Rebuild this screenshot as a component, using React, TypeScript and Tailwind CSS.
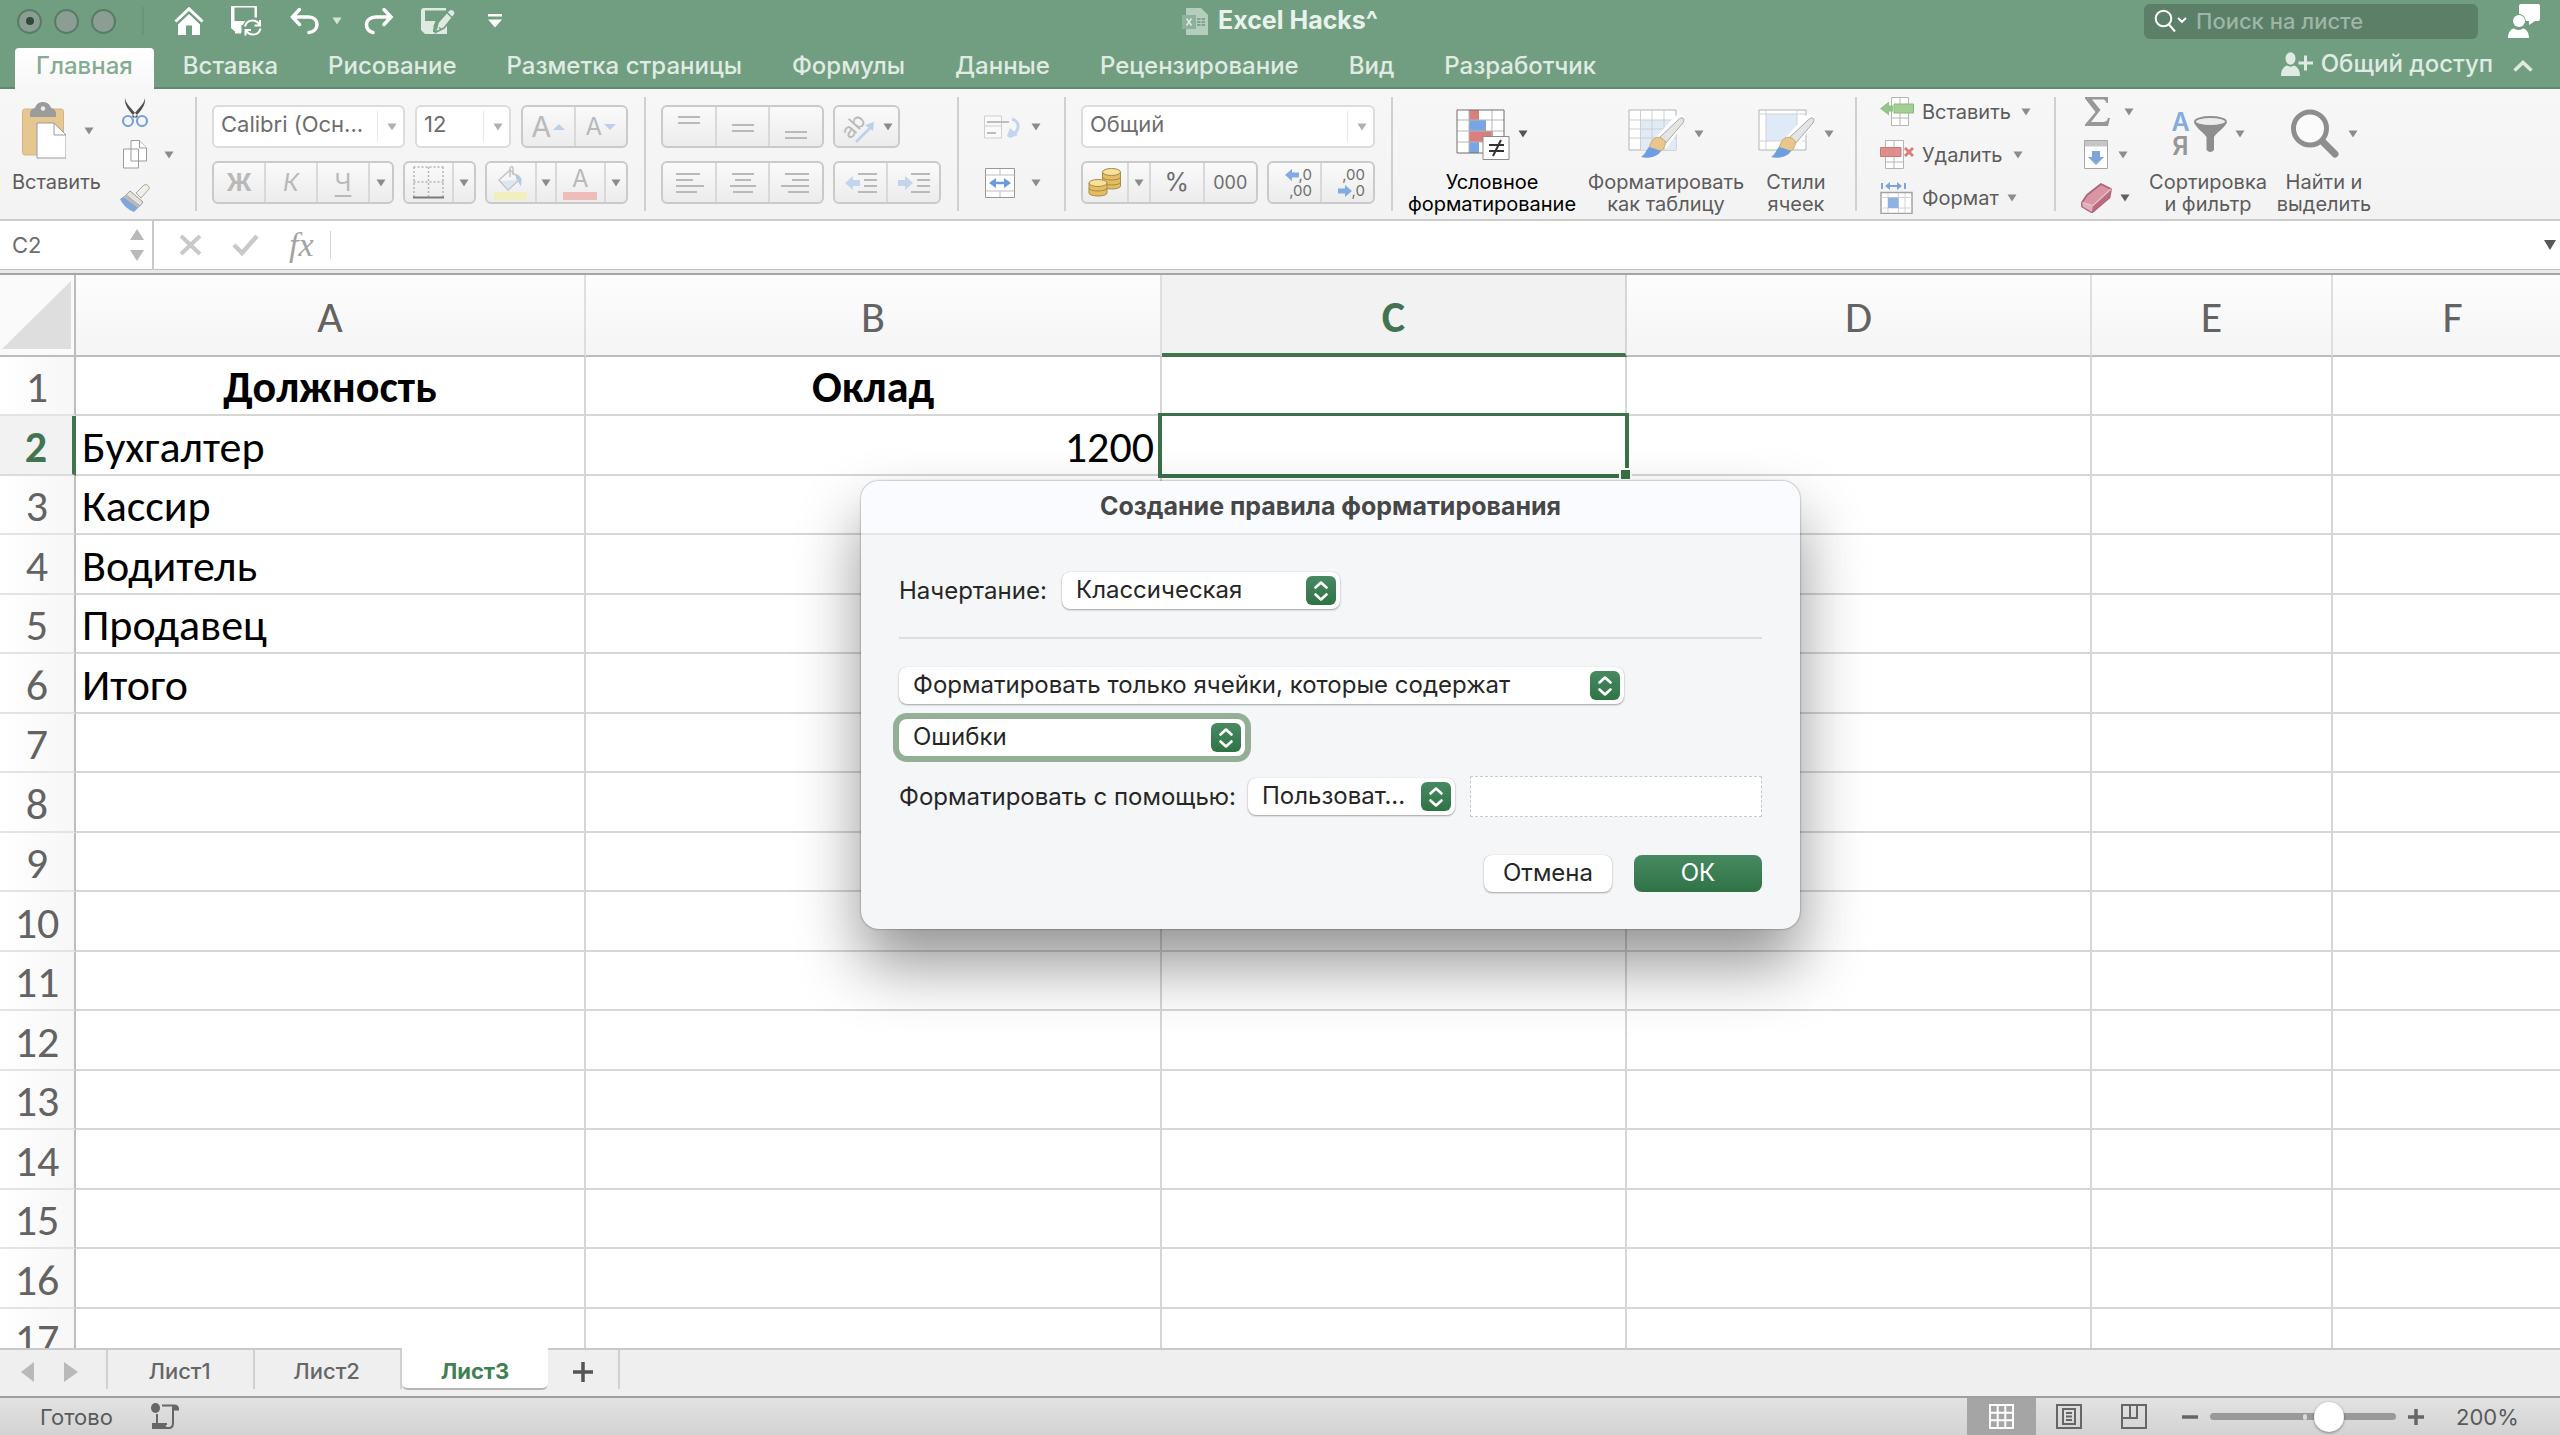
import React from "react";

const UI_FONT = "font-['Inter','Liberation_Sans',sans-serif]";
const CELL_FONT = "font-['Calibri','Lato','Noto_Sans',sans-serif]";

const RIBBON_TABS = [
  "Главная",
  "Вставка",
  "Рисование",
  "Разметка страницы",
  "Формулы",
  "Данные",
  "Рецензирование",
  "Вид",
  "Разработчик",
];

const COLUMNS = ["A", "B", "C", "D", "E", "F"];

const ROWS: { a?: string; b?: string; bold?: boolean }[] = [
  { a: "Должность", b: "Оклад", bold: true },
  { a: "Бухгалтер", b: "1200" },
  { a: "Кассир" },
  { a: "Водитель" },
  { a: "Продавец" },
  { a: "Итого" },
  ...Array.from({ length: 11 }, () => ({})),
];

/* ---------- small shared pieces ---------- */

function Caret({ className = "text-[#8c8c8c]" }: { className?: string }) {
  return (
    <svg
      className={`w-2.5 h-2 shrink-0 ${className}`}
      viewBox="0 0 10 8"
      fill="currentColor"
      aria-hidden="true"
    >
      <path d="M0.5 0.5h9L5 7.5z" />
    </svg>
  );
}

function Separator() {
  return <div className="w-0.5 h-[114px] mt-2 ml-4 mr-[15px] bg-[#d0d0d0] shrink-0" />;
}

function ButtonGroup({
  className = "",
  children,
}: {
  className?: string;
  children: React.ReactNode;
}) {
  return (
    <div
      className={`flex h-[43px] shrink-0 rounded-md border-2 border-[#cacaca] bg-linear-to-b from-[#fafafa] to-[#ececec] divide-x-2 divide-[#d9d9d9] ${className}`}
    >
      {children}
    </div>
  );
}

function Tool({
  label,
  className = "",
  children,
}: {
  label: string;
  className?: string;
  children: React.ReactNode;
}) {
  return (
    <button
      type="button"
      aria-label={label}
      className={`flex items-center justify-center ${className}`}
    >
      {children}
    </button>
  );
}

function RibbonSelect({
  label,
  value,
  className,
}: {
  label: string;
  value: string;
  className: string;
}) {
  return (
    <div className={`relative h-[43px] shrink-0 ${className}`}>
      <select
        aria-label={label}
        className="w-full h-full appearance-none rounded-md border-2 border-[#dcdcdc] bg-white pl-[7px] pr-8 pb-1 text-[22px] text-[#6d6d6d]"
      >
        <option>{value}</option>
      </select>
      <span className="pointer-events-none absolute right-0 inset-y-1.5 flex w-7 items-center justify-center border-l border-[#e8e8e8]">
        <Caret className="text-[#b0b0b0]" />
      </span>
    </div>
  );
}

function BigTool({
  icon,
  lines,
  className,
  dark = false,
}: {
  icon: React.ReactNode;
  lines: string[];
  className: string;
  dark?: boolean;
}) {
  return (
    <button
      type="button"
      className={`flex flex-col items-center self-start shrink-0 pt-5 ${className} ${dark ? "text-black" : "text-[#5c5c5c]"}`}
    >
      <span className="flex h-[50px] items-center gap-2">
        {icon}
        <Caret className={dark ? "text-[#555]" : "text-[#8c8c8c]"} />
      </span>
      <span className="mt-3 text-xl leading-[22px] whitespace-nowrap">
        {lines.map((line) => (
          <span key={line} className="block">
            {line}
          </span>
        ))}
      </span>
    </button>
  );
}

function Lines({ rows }: { rows: [number, number, number][] }) {
  return (
    <svg className="w-8 h-8" viewBox="0 0 32 32" stroke="#b9b9b9" strokeWidth="2" aria-hidden="true">
      {rows.map(([x1, x2, y]) => (
        <path key={y} d={`M${x1} ${y}H${x2}`} />
      ))}
    </svg>
  );
}

/* ---------- title bar ---------- */

function TitleBar() {
  return (
    <div className="relative flex h-12 items-center pb-1.5 text-white">
      <div className="flex gap-3 pl-[17px]">
        {[true, false, false].map((dot, i) => (
          <span
            key={i}
            className="flex size-[25px] items-center justify-center rounded-full border-2 border-[#587c65] bg-[#8c9e93]"
          >
            {dot && <span className="size-2 rounded-full bg-[#2f4a3a]" />}
          </span>
        ))}
      </div>
      <div className="ml-[26px] h-7 w-0.5 bg-[#69937a]" />
      <Tool label="Домой" className="ml-[30px]">
        <svg className="w-[30px] h-7" viewBox="0 0 30 28" aria-hidden="true">
          <path d="M1.500 14.500 15 1.800l13.500 12.700" fill="none" stroke="#fff" strokeWidth="3" />
          <path d="M4 17.500 15 7l11 10.500V28h-8V18.500h-6V28H4z" fill="#fff" />
        </svg>
      </Tool>
      <Tool label="Сохранить" className="ml-[27px]">
        <svg className="w-[31px] h-[30px]" viewBox="0 0 31 30" fill="none" aria-hidden="true">
          <path fillRule="evenodd" d="M0 0h26v11.500h-2.500V1.500H3.500V15H14l-2 4h-2v7.500H5L0 22z" fill="#fff" />
          <path d="M9.500 18.500v8M4 26.500h6" stroke="#fff" strokeWidth="2" />
          <path d="M14 20.500c1-4 4-6 7.500-6 3 0 5.500 1.500 6.700 4M29 14v5.500h-5.500M29.500 22.500c-1 4-4 6-7.500 6-3 0-5.500-1.500-6.700-4M14.500 29.500V24H20" stroke="#fff" strokeWidth="2" />
        </svg>
      </Tool>
      <Tool label="Отменить" className="ml-7">
        <svg className="w-[30px] h-7" viewBox="0 0 30 28" fill="none" stroke="#fff" strokeWidth="3.500" strokeLinecap="round" aria-hidden="true">
          <path d="M9.500 2.500 2.500 10l7 7.500M3 10h15.500c5.500 0 8.500 3.500 8.500 7.500s-3 7.500-8 8" />
        </svg>
      </Tool>
      <Caret className="ml-3 text-[#d5e4da]" />
      <Tool label="Вернуть" className="ml-[22px]">
        <svg className="w-[30px] h-7" viewBox="0 0 30 28" fill="none" stroke="#fff" strokeWidth="3.500" strokeLinecap="round" aria-hidden="true">
          <path d="m20 2.500 7 7.500-7 7.500M26.500 10H12c-6 0-9.500 3.500-9.500 7.500 0 4 2.500 7 6.500 8" />
        </svg>
      </Tool>
      <Tool label="Сохранить как" className="ml-[27px]">
        <svg className="w-[34px] h-7" viewBox="0 0 34 28" fill="none" aria-hidden="true">
          <path d="M3 1h22v2.500H4V14h10.500l-2 5v3H9v5H4l-4-4V4q0-3 3-3z" fill="#dfeae3" />
          <path d="M26 16v11H4v-2h5v-4h3v4h2v-3" fill="#dfeae3" />
          <path d="m14.500 25.500 2.500-10L28 3q2.500-2 5 .5 2 2 .500 4.500L23 21z" fill="#dfeae3" stroke="#719e80" strokeWidth="1.600" />
          <path d="m26 5.500 5.500 5.500M18 20.500l2 1.500" stroke="#719e80" strokeWidth="1.500" />
        </svg>
      </Tool>
      <Tool label="Настройка панели" className="ml-8">
        <svg className="w-4 h-3.5" viewBox="0 0 16 14" fill="#fff" aria-hidden="true">
          <path d="M1 0h14v2.500H1zM1 5.500h14L8 13.500z" />
        </svg>
      </Tool>

      <div className="absolute inset-x-0 top-0 mx-auto flex h-[42px] w-fit items-center gap-2.5">
        <svg className="w-[26px] h-[27px]" viewBox="0 0 26 27" aria-hidden="true">
          <path d="M4 0h15l7 7v20H4z" fill="#b5cdbd" />
          <path d="M15 10h8v8h-8z" fill="#7fa58c" />
          <path d="M15 12.500h8M15 15.500h8M19 10v8" stroke="#b5cdbd" />
          <path d="M0 7h14v14H0z" fill="#8db29a" />
          <path d="m4.500 10.500 5 7M9.500 10.500l-5 7" stroke="#dbe8df" strokeWidth="1.600" />
        </svg>
        <h1 className="text-[25px] font-bold text-[#e9f2ec]">Excel Hacks^</h1>
      </div>

      <label className="ml-auto mr-[30px] flex h-[35px] w-[334px] items-center rounded-md bg-[#5b7f67] pl-2.5">
        <svg className="w-[34px] h-6 shrink-0" viewBox="0 0 34 24" fill="none" stroke="#fff" strokeWidth="2" aria-hidden="true">
          <circle cx="9.500" cy="9.500" r="7.800" />
          <path d="m15 15.500 6 7M24 9l4 3.800L32 9" />
        </svg>
        <input
          type="search"
          aria-label="Поиск на листе"
          placeholder="Поиск на листе"
          className="ml-2 min-w-0 flex-1 bg-transparent text-[22px] font-medium text-white outline-none placeholder:text-[#9db6a6]"
        />
      </label>
      <Tool label="Учетная запись" className="mr-5">
        <svg className="w-8 h-[34px]" viewBox="0 0 32 34" fill="#fff" aria-hidden="true">
          <path d="M13 0h17q2 0 2 2v13q0 2-2 2h-3l-6 4v-4h-3c-1-5-4-7-7-7V2q0-2 2-2z" />
          <circle cx="11" cy="17" r="6" />
          <path d="M0 34c0-6 3-9 6-9.500 3 2 6 2 9 0 3 .5 6 3.500 6 9.500z" />
        </svg>
      </Tool>
    </div>
  );
}

function RibbonTabs() {
  return (
    <nav className="flex h-[41px] items-stretch border-b-2 border-[#608a70] pl-[15px] text-2xl font-medium text-[#e0ebe4]">
      {RIBBON_TABS.map((tab, i) => (
        <button
          key={tab}
          type="button"
          className={
            i === 0
              ? "-mb-0.5 mr-1 rounded-t-sm bg-linear-to-b from-white to-[#f7f7f7] px-[21px] pb-1.5 text-[#86ab93]"
              : "px-[25px] pb-1 whitespace-nowrap"
          }
        >
          {tab}
        </button>
      ))}
      <button type="button" className="ml-auto flex items-center gap-2 pb-2 whitespace-nowrap">
        <svg className="w-8 h-6" viewBox="0 0 32 24" fill="#dfeae3" aria-hidden="true">
          <ellipse cx="9.500" cy="6.500" rx="5" ry="6.200" />
          <path d="M0 24c0-6 2.500-9.500 6-10.500 2.500 1.500 4.500 1.500 7 0 3.500 1 6 4.500 6 10.500zM23 3.500h3v6h6v3h-6v6h-3v-6h-5.500v-3H23z" />
        </svg>
        Общий доступ
      </button>
      <Tool label="Свернуть ленту" className="ml-5 mr-[27px] pb-1">
        <svg className="w-5 h-3" viewBox="0 0 20 12" fill="none" stroke="#dfeae3" strokeWidth="3.500" aria-hidden="true">
          <path d="m1.500 10.500 8.500-8 8.500 8" />
        </svg>
      </Tool>
    </nav>
  );
}

/* ---------- ribbon ---------- */

function BrushGrid({ styles = false }: { styles?: boolean }) {
  return (
    <svg className="w-[58px] h-[50px] shrink-0" viewBox="0 0 58 50" aria-hidden="true">
      <path d="M1 1h47v40H1z" fill="#fff" stroke="#b3b3b3" />
      {styles ? (
        <>
          <path d="M8 5h31v27H8z" fill="#dfeaf8" />
          <path d="M1 5h47M1 32h47M8 1v40M39 1v40" stroke="#d2d2d2" />
        </>
      ) : (
        <>
          <path d="M12.500 11H48v30H12.500z" fill="#e1ebf7" />
          <path d="M1 11h47M1 20h47M1 29h47M12.500 1v40M24 1v40M36 1v40" stroke="#cfcfcf" />
        </>
      )}
      <path d="M29 30 48 9c5-4 9-1 6 4L38 37z" fill="#fff" stroke="#fff" strokeWidth="4" />
      <path d="M31 29 50 11c4-4 8-2 5 3L37 35z" fill="#e4e4e4" stroke="#a8a8a8" />
      <path d="M24 32c3-5 9-5 13 0 1 4-1 8-4 10H21c0-4 1-7 3-10z" fill="#e8c68d" stroke="#cfa767" />
      <path d="M21 38c5 1 9 3 12 4-3 6-13 8-20 6 4-2 5-7 8-10z" fill="#6d9fe0" />
    </svg>
  );
}

function ClipboardGroup() {
  return (
    <div className="flex shrink-0 gap-5 pl-3">
      <button type="button" className="w-[88px] self-start pt-[13px] text-[#5c5c5c]">
        <span className="flex items-center gap-[18px] pl-2.5">
          <svg className="w-11 h-[57px]" viewBox="0 0 44 57" aria-hidden="true">
            <rect x="0.500" y="7" width="41" height="46" rx="2.500" fill="#e6c691" stroke="#d4b37c" />
            <path d="M8 12q0-5 5-6c2-8 14-8 16 0q5 1 5 6v3H8z" fill="#9b9b9b" />
            <circle cx="21" cy="6.500" r="2.200" fill="#efefef" />
            <path d="M15 21h17l12 12v23H15z" fill="#fff" stroke="#9a9a9a" />
            <path d="M32 21v12h12" fill="none" stroke="#9a9a9a" />
          </svg>
          <Caret />
        </span>
        <span className="mt-3 block text-xl leading-[22px]">Вставить</span>
      </button>
      <div className="flex w-[59px] flex-col gap-3.5 pt-2">
        <Tool label="Вырезать" className="h-[29px] w-[30px]">
          <svg className="w-7 h-[30px]" viewBox="0 0 28 30" fill="none" aria-hidden="true">
            <path d="M4 1c1 6 6 10 13 18l-2 2C8 14 3 8 4 1zM24 1c-1 6-6 10-13 18l2 2C20 14 25 8 24 1z" fill="#4f4f4f" />
            <ellipse cx="7" cy="24" rx="5" ry="5" stroke="#78a3de" strokeWidth="2.200" />
            <ellipse cx="21" cy="24" rx="5" ry="5" stroke="#78a3de" strokeWidth="2.200" />
          </svg>
        </Tool>
        <div className="flex h-[29px] items-center gap-3.5">
          <Tool label="Копировать" className="w-[30px]">
            <svg className="w-6 h-[29px]" viewBox="0 0 24 29" fill="#fff" stroke="#9b9b9b" aria-hidden="true">
              <path d="M.5 9h15v19H.5zM8 .5h8.500l7 7.500v13H8z" />
              <path d="M16.500.5V8h7" />
            </svg>
          </Tool>
          <Caret />
        </div>
        <Tool label="Формат по образцу" className="h-[29px] w-[30px]">
          <svg className="w-[30px] h-7" viewBox="0 0 30 28" aria-hidden="true">
            <path d="m16 9 8-8c3-1 6 1 5 4l-8 9z" fill="#f3efe6" stroke="#a5a5a5" />
            <path d="m10 7 13 11-3 4L6 11z" fill="#e6e2da" stroke="#9b9b9b" />
            <path d="m6 11 14 11-6 6C8 26 3 21 0 15z" fill="#7fa6da" />
            <path d="m6 11 14 11-2 2L3 13z" fill="#b9b9b9" />
          </svg>
        </Tool>
      </div>
    </div>
  );
}

function FontGroup() {
  return (
    <div className="flex w-[416px] shrink-0 flex-col gap-[13px] pt-4">
      <div className="flex gap-2.5">
        <RibbonSelect label="Шрифт" value="Calibri (Осн..." className="w-[193px]" />
        <RibbonSelect label="Размер шрифта" value="12" className="w-24" />
        <ButtonGroup className="flex-1 text-[#b9b9b9]">
          <Tool label="Увеличить размер" className="flex-1 text-[29px]">
            A
            <svg className="ml-0.5 w-3 h-1.5" viewBox="0 0 12 6" fill="#bcd0ec" aria-hidden="true">
              <path d="M0 6h12L6 0z" />
            </svg>
          </Tool>
          <Tool label="Уменьшить размер" className="flex-1 text-2xl">
            A
            <svg className="ml-0.5 w-3 h-1.5" viewBox="0 0 12 6" fill="#bcd0ec" aria-hidden="true">
              <path d="M0 0h12L6 6z" />
            </svg>
          </Tool>
        </ButtonGroup>
      </div>
      <div className="flex gap-[9px] text-2xl text-[#b9b9b9]">
        <ButtonGroup className="w-[182px]">
          <Tool label="Полужирный" className="flex-1 font-bold">
            Ж
          </Tool>
          <Tool label="Курсив" className="flex-1 italic">
            К
          </Tool>
          <Tool label="Подчеркнутый" className="flex-1 underline underline-offset-4">
            Ч
          </Tool>
          <Tool label="Вид подчеркивания" className="w-[22px]">
            <Caret />
          </Tool>
        </ButtonGroup>
        <ButtonGroup className="w-[73px]">
          <Tool label="Границы" className="flex-1">
            <svg className="w-[31px] h-[33px]" viewBox="0 0 31 33" fill="none" aria-hidden="true">
              <path d="M.5 1h30M.5 16h30M1 1v30M15.500 1v30M30 1v30" stroke="#b5b5b5" strokeWidth="1.500" strokeDasharray="2 2" />
              <path d="M0 31.500h31" stroke="#7a7a7a" strokeWidth="2" />
            </svg>
          </Tool>
          <Tool label="Виды границ" className="w-5">
            <Caret />
          </Tool>
        </ButtonGroup>
        <ButtonGroup className="w-[143px]">
          <Tool label="Цвет заливки" className="flex-1">
            <svg className="w-[33px] h-9" viewBox="0 0 33 36" fill="none" aria-hidden="true">
              <path d="m5 15 11-10 10 9-12 11z" fill="#f5f5f5" stroke="#c4c4c4" strokeWidth="1.500" />
              <path d="M16 12V3q2-3 3 0v7" stroke="#c4c4c4" strokeWidth="1.500" />
              <path d="m7 16 16-1-9 9z" fill="#dbe6f5" />
              <path d="M22 9c6 2 6 6 5 12-2-1-2-5-5-7z" fill="#b3c8e6" />
              <path d="M0 27h33v8H0z" fill="#f0f0bd" />
            </svg>
          </Tool>
          <Tool label="Цвета заливки" className="w-5">
            <Caret />
          </Tool>
          <Tool label="Цвет текста" className="flex-1 flex-col">
            <span className="leading-[26px]">A</span>
            <span className="h-2 w-[34px] bg-[#eebcba]" />
          </Tool>
          <Tool label="Цвета текста" className="w-5">
            <Caret />
          </Tool>
        </ButtonGroup>
      </div>
    </div>
  );
}

function AlignGroup() {
  return (
    <div className="flex w-[280px] shrink-0 flex-col gap-[13px] pt-4">
      <div className="flex gap-[9px]">
        <ButtonGroup className="w-[163px]">
          <Tool label="По верхнему краю" className="flex-1">
            <Lines rows={[[5, 27, 6], [5, 27, 12]]} />
          </Tool>
          <Tool label="По середине" className="flex-1">
            <Lines rows={[[5, 27, 14], [5, 27, 20]]} />
          </Tool>
          <Tool label="По нижнему краю" className="flex-1">
            <Lines rows={[[5, 27, 21], [5, 27, 27]]} />
          </Tool>
        </ButtonGroup>
        <ButtonGroup className="w-[67px]">
          <Tool label="Ориентация" className="flex-1 gap-1.5">
            <svg className="w-9 h-9 overflow-visible" viewBox="0 0 36 36" aria-hidden="true">
              <text x="4" y="27" fontSize="21" fill="#b9b9b9" transform="rotate(-48 11 23)">
                ab
              </text>
              <path d="M15 33 31 17" stroke="#bcd0ec" strokeWidth="2.500" />
              <path d="m33 13-1 9-8-6z" fill="#bcd0ec" />
            </svg>
            <Caret />
          </Tool>
        </ButtonGroup>
      </div>
      <div className="flex gap-[9px]">
        <ButtonGroup className="w-[163px]">
          <Tool label="По левому краю" className="flex-1">
            <Lines rows={[[3, 27, 7], [3, 20, 13], [3, 31, 19], [3, 24, 25]]} />
          </Tool>
          <Tool label="По центру" className="flex-1">
            <Lines rows={[[5, 27, 7], [8, 24, 13], [3, 29, 19], [6, 26, 25]]} />
          </Tool>
          <Tool label="По правому краю" className="flex-1">
            <Lines rows={[[5, 29, 7], [12, 29, 13], [1, 29, 19], [8, 29, 25]]} />
          </Tool>
        </ButtonGroup>
        <ButtonGroup className="w-[108px]">
          <Tool label="Уменьшить отступ" className="flex-1">
            <svg className="w-8 h-8" viewBox="0 0 32 32" aria-hidden="true">
              <path d="M13 7h19M19 13h13M19 19h13M13 25h19" stroke="#b9b9b9" strokeWidth="2" />
              <path d="M0 16 8 9v4h7v6H8v4z" fill="#c3d5ee" />
            </svg>
          </Tool>
          <Tool label="Увеличить отступ" className="flex-1">
            <svg className="w-8 h-8" viewBox="0 0 32 32" aria-hidden="true">
              <path d="M13 7h19M19 13h13M19 19h13M13 25h19" stroke="#b9b9b9" strokeWidth="2" />
              <path d="M15 16 7 9v4H0v6h7v4z" fill="#c3d5ee" />
            </svg>
          </Tool>
        </ButtonGroup>
      </div>
    </div>
  );
}

function WrapGroup() {
  return (
    <div className="flex w-[74px] shrink-0 flex-col gap-[13px] pt-4 pl-2.5">
      <Tool label="Перенос текста" className="h-[43px] justify-start gap-2.5">
        <svg className="w-[37px] h-6" viewBox="0 0 37 24" fill="none" aria-hidden="true">
          <path d="M.5 1h17v22H.5zM1 11h16" fill="#fafafa" stroke="#cfcfcf" />
          <path d="M3 7h22M3 18h9" stroke="#bdbdbd" strokeWidth="2" />
          <path d="M28 4c7 2 8 9 3 14" stroke="#c3d5ee" strokeWidth="3" />
          <path d="m23 21 3-8 8 7-8 3z" fill="#c3d5ee" />
        </svg>
        <Caret />
      </Tool>
      <Tool label="Объединить ячейки" className="h-[43px] justify-start gap-4 pl-px">
        <svg className="w-[30px] h-[30px]" viewBox="0 0 30 30" fill="none" aria-hidden="true">
          <path d="M.5.5h29v29H.5z" fill="#fff" stroke="#989898" />
          <path d="M1 7h28M1 23h28M15 1v6M15 23v6" stroke="#bdbdbd" />
          <path d="M8 15h14" stroke="#6b9ad8" strokeWidth="2.500" />
          <path d="m4 15 7-5v10zM26 15l-7-5v10z" fill="#6b9ad8" />
        </svg>
        <Caret />
      </Tool>
    </div>
  );
}

function NumberGroup() {
  return (
    <div className="flex w-[294px] shrink-0 flex-col gap-[13px] pt-4">
      <RibbonSelect label="Числовой формат" value="Общий" className="w-full" />
      <div className="flex gap-[9px] text-[#6e6e6e]">
        <ButtonGroup className="w-[177px]">
          <Tool label="Денежный формат" className="w-[46px]">
            <svg className="w-[34px] h-[30px]" viewBox="0 0 34 30" fill="#e3bd5f" stroke="#a98a4a" aria-hidden="true">
              <path d="M14.500 4v14c0 4 18 4 18 0V4z" />
              <path d="M14.500 9c0 4 18 4 18 0M14.500 14c0 4 18 4 18 0" fill="none" />
              <ellipse cx="23.500" cy="4" rx="9" ry="3.500" fill="#f6e09a" />
              <path d="M1 15v10c0 4 18 4 18 0V15z" />
              <path d="M1 20c0 4 18 4 18 0" fill="none" />
              <ellipse cx="10" cy="15" rx="9" ry="3.500" fill="#f6e09a" />
            </svg>
          </Tool>
          <Tool label="Денежные форматы" className="w-[22px]">
            <Caret />
          </Tool>
          <Tool label="Процентный формат" className="flex-1 text-[25px]">
            %
          </Tool>
          <Tool label="Формат с разделителями" className="flex-1 text-lg">
            000
          </Tool>
        </ButtonGroup>
        <ButtonGroup className="w-[108px] text-[15px] leading-4">
          <Tool label="Увеличить разрядность" className="flex-1 flex-col items-end pr-2">
            <span className="flex items-center">
              <svg className="w-3.5 h-3" viewBox="0 0 14 12" fill="#83aae2" aria-hidden="true">
                <path d="m0 6 7-6v3.500h7v5H7V12z" />
              </svg>
              ,0
            </span>
            <span>,00</span>
          </Tool>
          <Tool label="Уменьшить разрядность" className="flex-1 flex-col items-end pr-2">
            <span>,00</span>
            <span className="flex items-center">
              <svg className="w-3.5 h-3" viewBox="0 0 14 12" fill="#83aae2" aria-hidden="true">
                <path d="M14 6 7 0v3.500H0v5h7V12z" />
              </svg>
              ,0
            </span>
          </Tool>
        </ButtonGroup>
      </div>
    </div>
  );
}

function StylesGroup() {
  return (
    <div className="flex shrink-0 gap-[13px] pr-[3px]">
      <BigTool
        dark
        className="w-[168px]"
        lines={["Условное", "форматирование"]}
        icon={
          <svg className="w-[54px] h-[51px]" viewBox="0 0 54 51" aria-hidden="true">
            <path d="M1 1h47v43H1z" fill="#fff" />
            <path d="M13 1h10v10H13zM13 22h24v11H13z" fill="#d9807e" />
            <path d="M13 11h17v11H13zM13 33h10v11H13z" fill="#77a5e6" />
            <path d="M1 11h47M1 22h47M1 33h47M13 1v43M36 1v43" stroke="#b5b5b5" fill="none" />
            <path d="M1 1h47v43H1z" fill="none" stroke="#6c6c6c" />
            <path d="M27 27.500h26v23H27z" fill="#fff" stroke="#8c8c8c" />
            <path d="M33 36h15M33 42h15M45 31l-8 16" stroke="#333" strokeWidth="2" />
          </svg>
        }
      />
      <BigTool className="w-[154px]" lines={["Форматировать", "как таблицу"]} icon={<BrushGrid />} />
      <BigTool className="w-20" lines={["Стили", "ячеек"]} icon={<BrushGrid styles />} />
    </div>
  );
}

function CellsGroup() {
  const row = "flex h-[29px] items-center gap-2 text-xl text-[#5c5c5c]";
  return (
    <div className="flex w-[166px] shrink-0 flex-col gap-3.5 pt-2 pl-2">
      <button type="button" className={row}>
        <svg className="w-[34px] h-[29px]" viewBox="0 0 34 29" aria-hidden="true">
          <path d="M11.500.5h17v28h-17zM11.500 21h17M20 .5v28" fill="#fff" stroke="#b5b5b5" />
          <path d="M14 7h19.500v9H14z" fill="#a3cf95" stroke="#89b87b" />
          <path d="m0 11.500 9-7v4h4v6H9v4z" fill="#93c487" />
        </svg>
        Вставить
        <Caret className="ml-0.5 text-[#8c8c8c]" />
      </button>
      <button type="button" className={row}>
        <svg className="w-[34px] h-[29px]" viewBox="0 0 34 29" aria-hidden="true">
          <path d="M5.500.5h18v28h-18zM5.500 22h18M14 .5v28" fill="#fff" stroke="#b5b5b5" />
          <path d="M.5 7.500H21v9H.5z" fill="#e08e8c" stroke="#cf7674" />
          <path d="m25 8 8 8M33 8l-8 8" stroke="#d87f7c" strokeWidth="3" />
        </svg>
        Удалить
        <Caret className="ml-0.5 text-[#8c8c8c]" />
      </button>
      <button type="button" className={row}>
        <svg className="w-[34px] h-8" viewBox="0 0 34 32" aria-hidden="true">
          <path d="M2 1v6M25 1v6" stroke="#7ea4da" strokeWidth="2" />
          <path d="m5 4 5-4v3h7V0l5 4-5 4V5h-7v3z" fill="#7ea4da" />
          <path d="M1 10.500h31v21H1z" fill="#fff" stroke="#a3a3a3" strokeWidth="1.500" />
          <path d="M8 11v20M18.500 11v20M25 11v20M1 15.500h31M1 26h31" stroke="#d4d4d4" />
          <path d="M8 15.500h10.500V26H8z" fill="#8fb2e2" />
        </svg>
        Формат
        <Caret className="text-[#8c8c8c]" />
      </button>
    </div>
  );
}

function EditGroup() {
  return (
    <div className="flex shrink-0 pl-2.5">
      <div className="flex w-[69px] flex-col gap-3.5 pt-2">
        <Tool label="Автосумма" className="h-[29px] justify-start gap-3.5 pl-1">
          <svg className="w-[25px] h-[29px]" viewBox="0 0 25 29" fill="#989898" aria-hidden="true">
            <path d="M0 0h23v6h-1.500c-1-3-2-3.500-5-3.500H7L15.500 13 6 25h11c4 0 5-1 6-4h2l-2 8H0v-1.500L10.500 15 0 1.500z" />
          </svg>
          <Caret />
        </Tool>
        <Tool label="Заполнить" className="h-[29px] justify-start gap-2.5 pl-[3px]">
          <svg className="w-6 h-[29px]" viewBox="0 0 24 29" aria-hidden="true">
            <path d="M.5.5h23v28H.5z" fill="#fff" stroke="#a6a6a6" />
            <path d="M1 1h22v5.500H1z" fill="#c6c6c6" />
            <path d="M8 11h8v6h4l-8 8-8-8h4z" fill="#7ea4da" />
          </svg>
          <Caret />
        </Tool>
        <Tool label="Очистить" className="h-[29px] justify-start gap-2">
          <svg className="w-[31px] h-[30px]" viewBox="0 0 31 30" aria-hidden="true">
            <path d="M1 19.500 6 12 20 1l10 5-1.500 8.500L11 29.500 1 23.500z" fill="#d795a5" stroke="#b0627a" strokeWidth="1.800" strokeLinejoin="round" />
            <path d="M1.500 19.500 12 22.500 11 29 1.500 23.500z" fill="#e0afba" />
            <path d="M12 22.500 30 6.500l-1.500 8L11 29z" fill="#bb6b81" />
            <path d="m1.500 19.500 10.500 3M12 22.500 30 6" stroke="#e9c3cc" strokeWidth="1.200" />
          </svg>
          <Caret className="text-[#5f5f5f]" />
        </Tool>
      </div>
      <BigTool
        className="w-[116px]"
        lines={["Сортировка", "и фильтр"]}
        icon={
          <span className="flex items-center gap-1">
            <span className="flex flex-col items-center text-[25px] leading-6 font-semibold text-[#979797]">
              <span className="text-[#83aae2]">А</span>
              <span>Я</span>
            </span>
            <svg className="w-[33px] h-[37px]" viewBox="0 0 33 37" aria-hidden="true">
              <path d="M0 6c1 5 8 9 12.500 15v13q4 4 7.500 0V21C24 15 32 11 33 6z" fill="#8e8e8e" />
              <ellipse cx="16.500" cy="5.500" rx="15.500" ry="4.500" fill="#ececec" stroke="#8e8e8e" strokeWidth="1.800" />
            </svg>
          </span>
        }
      />
      <BigTool
        className="ml-3 w-[92px]"
        lines={["Найти и", "выделить"]}
        icon={
          <svg className="w-[50px] h-[50px]" viewBox="0 0 50 50" fill="none" aria-hidden="true">
            <path d="m31 31 14 14" stroke="#8e8e8e" strokeWidth="7" strokeLinecap="round" />
            <circle cx="20" cy="19.500" r="16.500" fill="#fbfbfb" stroke="#8e8e8e" strokeWidth="5" />
          </svg>
        }
      />
    </div>
  );
}

function Ribbon() {
  return (
    <div className="flex h-[132px] shrink-0 overflow-hidden border-b-2 border-[#cbcbcb] bg-linear-to-b from-[#f7f7f7] to-[#f3f3f3]">
      <ClipboardGroup />
      <Separator />
      <FontGroup />
      <Separator />
      <AlignGroup />
      <Separator />
      <WrapGroup />
      <Separator />
      <NumberGroup />
      <Separator />
      <StylesGroup />
      <Separator />
      <CellsGroup />
      <Separator />
      <EditGroup />
    </div>
  );
}

function FormulaBar() {
  return (
    <div className="flex h-[54px] shrink-0 border-b-2 border-[#a5a5a5] bg-[#e9e9e9] pb-[3px]">
      <div className="flex flex-1 items-center border-b border-[#c4c4c4] bg-white">
        <div className="flex h-full w-[154px] items-center border-r-2 border-[#c9c9c9]">
          <input
            aria-label="Имя ячейки"
            defaultValue="C2"
            className="ml-3 w-[118px] text-[22px] text-[#6d6d6d] outline-none"
          />
          <svg className="w-3.5 h-8" viewBox="0 0 14 32" fill="#b9b9b9" aria-hidden="true">
            <path d="M0 11h14L7 0zM0 21h14L7 32z" />
          </svg>
        </div>
        <Tool label="Отменить ввод" className="ml-[25px]">
          <svg className="w-[23px] h-[22px]" viewBox="0 0 23 22" stroke="#c9c9c9" strokeWidth="4" aria-hidden="true">
            <path d="m2 2 19 18M21 2 2 20" />
          </svg>
        </Tool>
        <Tool label="Ввести" className="ml-[30px]">
          <svg className="w-[27px] h-[22px]" viewBox="0 0 27 22" fill="none" stroke="#c9c9c9" strokeWidth="4.500" aria-hidden="true">
            <path d="m2 11 8 8L25 2" />
          </svg>
        </Tool>
        <Tool label="Вставить функцию" className="ml-[30px] font-['Liberation_Serif',serif] text-[34px] leading-10 italic text-[#a3a3a3]">
          fx
        </Tool>
        <div className="ml-4 h-7 w-px bg-[#d5d5d5]" />
        <input aria-label="Строка формул" className="min-w-0 flex-1 px-3 text-[22px] outline-none" />
        <Tool label="Развернуть строку формул" className="mr-1">
          <svg className="w-3 h-2.5" viewBox="0 0 12 10" fill="#585858" aria-hidden="true">
            <path d="M0 0h12L6 10z" />
          </svg>
        </Tool>
      </div>
    </div>
  );
}

/* ---------- sheet ---------- */

function Sheet() {
  return (
    <div className="min-h-0 flex-1 overflow-hidden bg-white">
      <table className={`w-[2574px] table-fixed border-separate border-spacing-0 text-[44px] leading-[54px] text-black ${CELL_FONT}`}>
        <colgroup>
          <col className="w-[76px]" />
          <col className="w-[510px]" />
          <col className="w-[576px]" />
          <col className="w-[465px]" />
          <col className="w-[465px]" />
          <col className="w-[241px]" />
          <col className="w-[241px]" />
        </colgroup>
        <thead>
          <tr className="h-[82px]">
            <th className="border-r-2 border-b-2 border-[#bdbdbd] bg-[#fafafa] p-0">
              <svg className="ml-0.5 w-[69px] h-[68px]" viewBox="0 0 69 68" fill="#dedede" aria-hidden="true">
                <path d="M69 0v68H0z" />
              </svg>
            </th>
            {COLUMNS.map((name) => (
              <th
                key={name}
                scope="col"
                className={
                  name === "C"
                    ? "border-r-2 border-b-4 border-r-[#d6d6d6] border-b-[#42754f] bg-[#f2f2f2] px-0 pt-[5px] pb-0 font-bold text-[#42754f]"
                    : "border-r-2 border-b-2 border-r-[#dedede] border-b-[#bdbdbd] bg-linear-to-b from-[#fdfdfd] to-[#f5f5f5] px-0 pt-[3px] pb-0 font-normal text-[#636363]"
                }
              >
                {name}
              </th>
            ))}
          </tr>
        </thead>
        <tbody>
          {ROWS.map((row, r) => (
            <tr key={r} className="h-[59px] even:h-[60px]">
              <th
                scope="row"
                className={
                  r === 1
                    ? "border-r-4 border-b-2 border-r-[#42754f] border-b-[#dcdcdc] bg-[#f2f2f2] px-0 pt-[3px] pb-0 font-bold text-[#42754f]"
                    : "border-r-2 border-b-2 border-r-[#bdbdbd] border-b-[#e3e3e3] bg-linear-to-r from-white to-[#f7f7f7] px-0 pt-[3px] pb-0 font-normal text-[#636363]"
                }
              >
                {r + 1}
              </th>
              {COLUMNS.map((name) => (
                <td
                  key={name}
                  className={`relative border-r-2 border-b-2 border-[#d6d6d6] px-1.5 pt-[3px] pb-0 ${
                    row.bold ? "text-center font-bold" : name === "B" ? "text-right" : "text-left"
                  }`}
                >
                  {name === "A" && row.a}
                  {name === "B" && row.b}
                  {name === "C" && r === 1 && (
                    <div className="absolute -inset-1 -top-[3px] z-10 border-4 border-t-3 border-[#3b7048]">
                      <span className="absolute -right-[7px] -bottom-[7px] size-[13px] border-2 border-white bg-[#3b7048]" />
                    </div>
                  )}
                </td>
              ))}
            </tr>
          ))}
        </tbody>
      </table>
    </div>
  );
}

function SheetTabs() {
  return (
    <div className="flex h-12 shrink-0 border-t-2 border-[#c9c9c9] bg-[#efefef] text-[22px] text-[#666]">
      <div className="flex h-[39px] w-[108px] items-center gap-[29px] border-r-2 border-[#d0d0d0] pt-1 pl-[21px]">
        <Tool label="Предыдущий лист">
          <svg className="w-3.5 h-5" viewBox="0 0 14 20" fill="#b9b9b9" aria-hidden="true">
            <path d="M13 0v20L0 10z" />
          </svg>
        </Tool>
        <Tool label="Следующий лист">
          <svg className="w-3.5 h-5" viewBox="0 0 14 20" fill="#b9b9b9" aria-hidden="true">
            <path d="M0 0v20l14-10z" />
          </svg>
        </Tool>
      </div>
      <button type="button" className="h-[39px] w-[147px] border-r-2 border-[#d0d0d0] pt-1 pr-0.5 font-medium">
        Лист1
      </button>
      <button type="button" className="h-[39px] w-[147px] border-r-2 border-[#d0d0d0] pt-1 pr-0.5 font-medium">
        Лист2
      </button>
      <button
        type="button"
        className="-mt-0.5 h-[42px] w-[146px] rounded-b-md border-b-2 border-[#b5b5b5] bg-white pt-1.5 font-bold text-[#3f8152]"
      >
        Лист3
      </button>
      <Tool label="Новый лист" className="h-[39px] w-[72px] border-r-2 border-[#d0d0d0] pt-1">
        <svg className="size-5" viewBox="0 0 20 20" stroke="#555" strokeWidth="3.500" aria-hidden="true">
          <path d="M10 0v20M0 10h20" />
        </svg>
      </Tool>
    </div>
  );
}

function StatusBar() {
  return (
    <footer className="flex h-[39px] shrink-0 items-center border-t-2 border-[#9f9f9f] bg-linear-to-b from-[#e2e2e2] to-[#d3d3d3] pl-10 text-[22px] text-[#5a5a5a]">
      <span className="pt-0.5">Готово</span>
      <Tool label="Запись макроса" className="ml-[38px]">
        <svg className="w-7 h-[27px]" viewBox="0 0 28 27" fill="none" stroke="#666" strokeWidth="2" aria-hidden="true">
          <ellipse cx="4.500" cy="5" rx="4.500" ry="5" fill="#666" stroke="none" />
          <path d="M11 2.500h12q4 0 4 4h-5V20q0 5-4 5H2v-4h14M6 11v10M22 7V5q0-2 2-2" />
          <path d="M1 21h13l2 4H1zM22 2h3q3 1 3 5h-6z" fill="#666" stroke="none" />
        </svg>
      </Tool>
      <div className="ml-auto flex h-full items-center">
        <Tool label="Обычный" className="h-full w-[69px] bg-[#a5a5a5]">
          <svg className="w-[25px] h-[25px]" viewBox="0 0 25 25" fill="none" stroke="#fff" strokeWidth="2" aria-hidden="true">
            <path d="M1 1h23v23H1zM1 8.700h23M1 16.300h23M8.700 1v23M16.300 1v23" />
          </svg>
        </Tool>
        <Tool label="Разметка страницы" className="w-[65px]">
          <svg className="w-[26px] h-[25px]" viewBox="0 0 26 25" fill="none" stroke="#666" strokeWidth="2" aria-hidden="true">
            <path d="M1 1h24v23H1zM7 5h12v15H7zM10 9h6M10 12.500h6M10 16h6" />
          </svg>
        </Tool>
        <Tool label="Страничный режим" className="w-[65px]">
          <svg className="w-[26px] h-[25px]" viewBox="0 0 26 25" fill="none" stroke="#666" strokeWidth="2" aria-hidden="true">
            <path d="M1 1h24v23H1zM1 14h15V1M9 1v13" />
          </svg>
        </Tool>
        <Tool label="Уменьшить масштаб" className="ml-4">
          <svg className="size-4" viewBox="0 0 16 16" stroke="#666" strokeWidth="3.500" aria-hidden="true">
            <path d="M0 8h16" />
          </svg>
        </Tool>
        <div className="relative ml-3 flex w-[186px] items-center">
          <input
            type="range"
            aria-label="Масштаб"
            min={0}
            max={300}
            defaultValue={200}
            className="h-[7px] w-full appearance-none rounded-full bg-[#999] [&::-webkit-slider-thumb]:size-[30px] [&::-webkit-slider-thumb]:appearance-none [&::-webkit-slider-thumb]:rounded-full [&::-webkit-slider-thumb]:bg-white [&::-webkit-slider-thumb]:shadow-[0_1px_3px_#0006]"
          />
          <span className="pointer-events-none absolute left-1/2 h-1.5 w-1 rounded-full bg-[#dadada]" />
        </div>
        <Tool label="Увеличить масштаб" className="ml-3">
          <svg className="size-4" viewBox="0 0 16 16" stroke="#666" strokeWidth="3.500" aria-hidden="true">
            <path d="M0 8h16M8 0v16" />
          </svg>
        </Tool>
        <span className="ml-8 w-[104px] pt-0.5">200%</span>
      </div>
    </footer>
  );
}

/* ---------- dialog ---------- */

function PopupSelect({
  id,
  label,
  value,
  className,
  focused = false,
}: {
  id: string;
  label?: string;
  value: string;
  className: string;
  focused?: boolean;
}) {
  return (
    <div className={`relative h-[37px] ${className}`}>
      <select
        id={id}
        aria-label={label}
        className={`w-full h-full appearance-none rounded-lg bg-white pl-3.5 pr-9 pb-0.5 text-2xl text-[#262626] outline-none ${
          focused ? "ring-6 ring-[#93b097]" : "shadow-[0_1px_2px_#0005,0_0_1px_#0003]"
        }`}
      >
        <option>{value}</option>
      </select>
      <span className="pointer-events-none absolute right-1 inset-y-1 flex w-[30px] items-center justify-center rounded-md bg-linear-to-b from-[#478a62] to-[#2f7345]">
        <svg className="w-3.5 h-5" viewBox="0 0 14 20" fill="none" stroke="#fff" strokeWidth="2.600" strokeLinecap="round" strokeLinejoin="round" aria-hidden="true">
          <path d="m1.500 6.500 5.500-5 5.500 5M1.500 13.500l5.500 5 5.500-5" />
        </svg>
      </span>
    </div>
  );
}

function RuleDialog() {
  return (
    <div
      role="dialog"
      aria-labelledby="rule-title"
      className="absolute left-[861px] top-[481px] z-20 w-[939px] overflow-hidden rounded-[18px] bg-[#f4f6f8] text-2xl text-[#262626] shadow-[0_0_2px_#0008,0_36px_64px_#0000006b]"
    >
      <h2
        id="rule-title"
        className="flex h-[54px] items-center justify-center border-b-2 border-[#e4e6e8] bg-[#fafbfe] text-[25px] font-bold text-[#474747]"
      >
        Создание правила форматирования
      </h2>
      <form className="px-[38px] pt-[37px] pb-[37px]" onSubmit={(e) => e.preventDefault()}>
        <div className="flex items-center">
          <label htmlFor="rule-style" className="w-[163px]">
            Начертание:
          </label>
          <PopupSelect id="rule-style" value="Классическая" className="w-[278px]" />
        </div>
        <hr className="mt-7 border-t-2 border-[#dcdee0]" />
        <PopupSelect
          id="rule-type"
          label="Тип правила"
          value="Форматировать только ячейки, которые содержат"
          className="mt-7 w-[725px]"
        />
        <PopupSelect
          id="rule-kind"
          label="Условие"
          value="Ошибки"
          focused
          className="mt-[15px] w-[346px]"
        />
        <div className="mt-5 flex items-center">
          <label htmlFor="rule-format" className="w-[349px]">
            Форматировать с помощью:
          </label>
          <PopupSelect id="rule-format" value="Пользоват..." className="w-[207px]" />
          <div className="ml-[15px] h-[41px] flex-1 border border-dashed border-[#c9c9c9] bg-white" />
        </div>
        <div className="mt-[38px] flex justify-end gap-[22px]">
          <button
            type="button"
            className="h-[37px] w-32 rounded-lg bg-white pb-0.5 leading-8 shadow-[0_1px_2px_#0005,0_0_1px_#0003]"
          >
            Отмена
          </button>
          <button
            type="submit"
            className="h-[37px] w-32 rounded-lg bg-linear-to-b from-[#478a62] to-[#2f7345] pb-0.5 leading-8 text-white"
          >
            ОК
          </button>
        </div>
      </form>
    </div>
  );
}

export default function App() {
  return (
    <div className={`relative flex h-screen flex-col overflow-hidden bg-white ${UI_FONT}`}>
      <header className="shrink-0 bg-[#719e80]">
        <TitleBar />
        <RibbonTabs />
      </header>
      <Ribbon />
      <FormulaBar />
      <Sheet />
      <SheetTabs />
      <StatusBar />
      <RuleDialog />
    </div>
  );
}
